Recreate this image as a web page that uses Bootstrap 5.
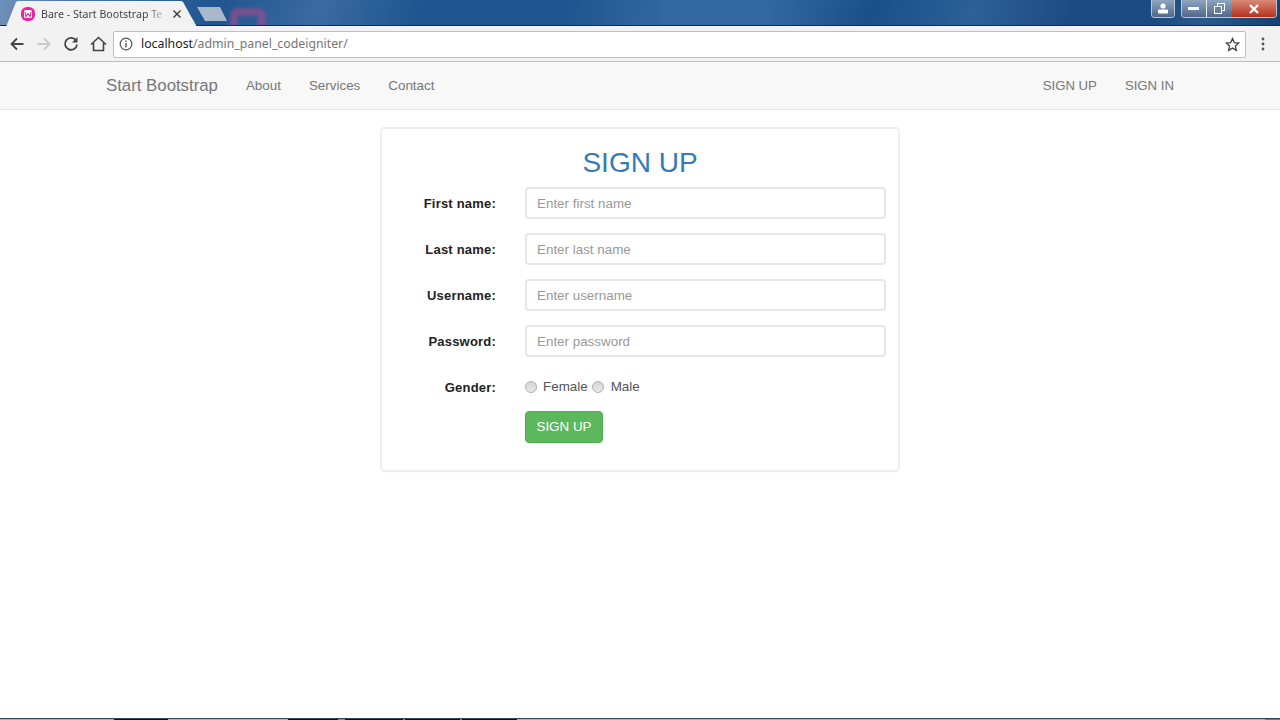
<!DOCTYPE html>
<html lang="en">
<head>
    <meta charset="UTF-8">
    <meta name="viewport" content="width=device-width, initial-scale=1.0">
    <title>Bare - Start Bootstrap Template</title>
    <link href="https://cdn.jsdelivr.net/npm/bootstrap@5.3.0/dist/css/bootstrap.min.css" rel="stylesheet">
    <style>
        html, body { height: 100%; }
        body { font-family: "Liberation Sans", Arial, sans-serif; font-size: 14px; color: #333; background: #fff; overflow: hidden; }
        .page-wrap { height: 720px; }

        /* browser frame */
        .win-frame { height: 26px; flex: none; border-bottom: 1px solid #0f2c52; background: linear-gradient(100deg, #6f8fb8 0, #4a78ad 5%, #1f5590 17%, #3a6ba0 25%, #1f5590 33%, #1f5590 44%, #33679f 52%, #33679f 60%, #1b4f88 68%, #2c6097 76%, #1a4a80 84%, #1a4a80 90%, #2a5a8a 94%, #16406f 100%); }
        .tab-active { width: 197px; height: 26px; flex: none; }
        .tab-shape { inset: 0; }
        .tab-favicon { left: 21px; top: 7px; }
        .tab-title { left: 41px; top: 7px; font-family: "Noto Sans", sans-serif; font-size: 10.6px; line-height: 14px; color: #444; white-space: nowrap; -webkit-mask-image: linear-gradient(90deg, #000 88%, rgba(0,0,0,.25)); mask-image: linear-gradient(90deg, #000 88%, rgba(0,0,0,.25)); }
        .tab-close { left: 172px; top: 9px; }
        .tab-blob { filter: blur(1.5px); }
        .win-btns { padding-right: 3px; gap: 6px; }
        .win-group { height: 18px; border: 1px solid #b9c6d6; border-top: 0; border-radius: 0 0 4px 4px; overflow: hidden; }
        .win-item { height: 17px; background: linear-gradient(#8ea4bf, #50688a); }
        .win-close { background: linear-gradient(#d98a78, #b5301d); }

        /* toolbar */
        .tool-bar { height: 36px; flex: none; background: #f2f2f2; border-bottom: 1px solid #bdbdbd; padding: 1px 0 0 9px; }
        .tool-icons { gap: 11px; width: 104px; flex: none; }
        .url-box { height: 27px; width: 1133px; background: #fff; border: 1px solid #bfbfbf; border-radius: 2px; padding: 0 5px; font-family: "Noto Sans", sans-serif; font-size: 12.3px; color: #767676; }
        .url-host { color: #222; }
        .more-dots { width: 4px; margin-left: 15px; }

        /* site navbar */
        .site-nav { height: 48px; flex: none; background: #f8f8f8; border-bottom: 1px solid #e7e7e7; padding: 0 !important; }
        .site-inner { max-width: 1170px; margin: 0 auto; padding: 0 51px; }
        .site-nav .navbar-brand { font-size: 16.8px; color: #777; padding: 0; margin: 0 28px 0 0; }
        .site-nav .nav-link { font-size: 13.4px; color: #777; padding: 0; }
        .nav-gap { gap: 28px; padding-top: 1px; }
        .nav-gap-end { gap: 28px; }
        .nav-gap-end .nav-link { font-size: 13.2px; }

        /* sign up card */
        .signup-box { width: 520px; height: 345px; margin: 17px auto 0; border: 2px solid #f3ecee; border-radius: 4px; }
        .signup-title { font-size: 28px; line-height: 32px; color: #337ab7; margin: 18px 0 9px; text-align: center; }
        .form-line { height: 31px; margin-bottom: 15px; }
        .gender-line { margin-bottom: 8px; }
        .form-lbl { width: 114px; margin: 0 29px 0 0; text-align: right; font-size: 13px; font-weight: 700; color: #222; letter-spacing: .2px; flex: none; }
        .form-field { width: 361px; height: 32px; align-self: flex-start; margin-top: -1px; border: 2px solid #e6e6e6; border-radius: 4px; padding: 0 10px; font-size: 13.4px; color: #555; box-shadow: none; }
        .form-field::placeholder { color: #999; opacity: 1; }
        .gender-opts { color: #555; font-size: 13.4px; }
        .gender-dot { width: 12px; height: 12px; flex: none; border-radius: 50%; border: 1px solid #b0b0b0; background: linear-gradient(#d6d6d6, #e8e8e8); margin-right: 6px; }
        .gender-gap { margin-right: 4px; }
        .gender-male { margin-left: 1px; }
        .signup-btn { width: 78px; height: 32px; margin-left: 143px; padding: 0; font-size: 13.4px; background: #5cb85c; border: 1px solid #4cae4c; color: #fff; border-radius: 4px; }

        /* bottom edge of the screen */
        .task-edge { height: 2px; background: linear-gradient(90deg, #9fb0c2 0 114px, #111 114px 168px, #a9b6c8 168px 288px, #111 288px 338px, #8c8c8c 338px 345px, #111 345px 403px, #8c8c8c 403px 405px, #111 405px 460px, #8c8c8c 460px 462px, #111 462px 517px, #a9b6c8 517px 1265px, #777 1265px 1280px); border-top: 1px solid #33475e; }
    </style>
</head>
<body>
    <div class="page-wrap d-flex flex-column">
        <div class="win-frame d-flex justify-content-between">
            <div class="d-flex">
                <div class="tab-active position-relative">
                    <svg class="tab-shape position-absolute" width="197" height="27" viewBox="0 0 197 27"><path d="M6 27 L16 2 Q17 1 19 1 L180 1 Q182 1 183 2 L197 27 Z" fill="#f2f2f2"/></svg>
                    <svg class="tab-favicon position-absolute" width="14" height="14" viewBox="0 0 14 14"><rect x="0" y="0" width="14" height="14" rx="6" fill="#e8259f"/><rect x="3" y="3" width="8" height="8" rx="1.5" fill="#fff"/><path d="M4 5 L5 9.5 L7 6.5 L9 9.5 L10 5" fill="none" stroke="#e8259f" stroke-width="1.1"/></svg>
                    <span class="tab-title position-absolute">Bare - Start Bootstrap Te</span>
                    <svg class="tab-close position-absolute" width="10" height="10" viewBox="0 0 10 10"><path d="M1.5 1.5 L8.5 8.5 M8.5 1.5 L1.5 8.5" stroke="#444" stroke-width="1.5"/></svg>
                </div>
                <svg width="80" height="25" viewBox="0 0 80 25"><path class="tab-blob" d="M37 27 V16 Q37 12 42 12 H60 Q65 12 65 16 V27" fill="none" stroke="#82508f" stroke-width="8" opacity=".85"/><path d="M0 7 L23 7 L30 21 L8 21 Z" fill="#aab8cc"/></svg>
            </div>
            <div class="win-btns d-flex align-items-start">
                <div class="win-group d-flex">
                    <div class="win-item d-flex align-items-center justify-content-center" style="width:22px">
                        <svg width="12" height="11" viewBox="0 0 12 11"><circle cx="6" cy="3" r="2.6" fill="#fff"/><rect x="1" y="6.5" width="10" height="4" rx="1" fill="#fff"/></svg>
                    </div>
                </div>
                <div class="win-group d-flex">
                    <div class="win-item d-flex align-items-center justify-content-center border-end border-light-subtle" style="width:25px">
                        <svg width="12" height="5" viewBox="0 0 12 5"><rect y="1" width="11" height="3" fill="#fff"/></svg>
                    </div>
                    <div class="win-item d-flex align-items-center justify-content-center" style="width:25px">
                        <svg width="11" height="11" viewBox="0 0 11 11"><rect x="3.5" y=".5" width="7" height="7" fill="none" stroke="#fff"/><rect x=".5" y="3.5" width="7" height="7" fill="#6a80a0" stroke="#fff"/></svg>
                    </div>
                    <div class="win-item win-close d-flex align-items-center justify-content-center" style="width:44px">
                        <svg width="12" height="10" viewBox="0 0 12 10"><path d="M2 1 L10 9 M10 1 L2 9" stroke="#fff" stroke-width="2.4"/></svg>
                    </div>
                </div>
            </div>
        </div>

        <div class="tool-bar d-flex align-items-center">
            <div class="tool-icons d-flex align-items-center">
                <svg width="16" height="16" viewBox="0 0 16 16"><path d="M14.5 8 H2.5 M8 2.5 L2.5 8 L8 13.5" fill="none" stroke="#444" stroke-width="1.8"/></svg>
                <svg width="16" height="16" viewBox="0 0 16 16"><path d="M1.5 8 H13.5 M8 2.5 L13.5 8 L8 13.5" fill="none" stroke="#c9c9c9" stroke-width="1.8"/></svg>
                <svg width="16" height="16" viewBox="0 0 16 16"><path d="M13 4.5 A6 6 0 1 0 14 8.5" fill="none" stroke="#444" stroke-width="1.8"/><path d="M14.5 1 V6.5 H9 Z" fill="#444"/></svg>
                <svg width="17" height="16" viewBox="0 0 17 16"><path d="M1 8.5 L8.5 1.5 L16 8.5 M3.5 7 V14.5 H13.5 V7" fill="none" stroke="#444" stroke-width="1.6"/></svg>
            </div>
            <div class="url-box d-flex align-items-center">
                <svg width="14" height="14" viewBox="0 0 14 14" class="me-2 flex-none"><circle cx="7" cy="7" r="5.8" fill="none" stroke="#555" stroke-width="1.2"/><rect x="6.3" y="6" width="1.4" height="4.4" fill="#555"/><rect x="6.3" y="3.6" width="1.4" height="1.4" fill="#555"/></svg>
                <span><span class="url-host">localhost</span>/admin_panel_codeigniter/</span>
                <svg width="15" height="15" viewBox="0 0 15 15" class="ms-auto"><path d="M7.5 1.5 L9.3 5.6 L13.7 6 L10.4 9 L11.4 13.4 L7.5 11.1 L3.6 13.4 L4.6 9 L1.3 6 L5.7 5.6 Z" fill="none" stroke="#444" stroke-width="1.3"/></svg>
            </div>
            <svg class="more-dots" width="4" height="14" viewBox="0 0 4 14"><circle cx="2" cy="2" r="1.4" fill="#555"/><circle cx="2" cy="7" r="1.4" fill="#555"/><circle cx="2" cy="12" r="1.4" fill="#555"/></svg>
        </div>

        <nav class="navbar site-nav">
            <div class="site-inner d-flex align-items-center justify-content-between w-100">
                <div class="d-flex align-items-center">
                    <a class="navbar-brand" href="#">Start Bootstrap</a>
                    <div class="d-flex nav-gap">
                        <a class="nav-link" href="#">About</a>
                        <a class="nav-link" href="#">Services</a>
                        <a class="nav-link" href="#">Contact</a>
                    </div>
                </div>
                <div class="d-flex nav-gap-end">
                    <a class="nav-link" href="#">SIGN UP</a>
                    <a class="nav-link" href="#">SIGN IN</a>
                </div>
            </div>
        </nav>

        <div class="signup-box flex-none">
            <h2 class="signup-title">SIGN UP</h2>
            <form>
                <div class="form-line d-flex align-items-center">
                    <label class="form-lbl" for="firstName">First name:</label>
                    <input class="form-field form-control" id="firstName" placeholder="Enter first name">
                </div>
                <div class="form-line d-flex align-items-center">
                    <label class="form-lbl" for="lastName">Last name:</label>
                    <input class="form-field form-control" id="lastName" placeholder="Enter last name">
                </div>
                <div class="form-line d-flex align-items-center">
                    <label class="form-lbl" for="userName">Username:</label>
                    <input class="form-field form-control" id="userName" placeholder="Enter username">
                </div>
                <div class="form-line d-flex align-items-center">
                    <label class="form-lbl" for="passWord">Password:</label>
                    <input class="form-field form-control" id="passWord" placeholder="Enter password">
                </div>
                <div class="form-line gender-line d-flex align-items-center">
                    <span class="form-lbl">Gender:</span>
                    <div class="gender-opts d-flex align-items-center">
                        <span class="gender-dot"></span><span class="gender-gap">Female</span>
                        <span class="gender-dot"></span><span class="gender-male">Male</span>
                    </div>
                </div>
                <button type="button" class="btn signup-btn d-block">SIGN UP</button>
            </form>
        </div>

        <div class="task-edge mt-auto"></div>
    </div>
    <script src="https://cdn.jsdelivr.net/npm/bootstrap@5.3.0/dist/js/bootstrap.bundle.min.js"></script>
</body>
</html>
